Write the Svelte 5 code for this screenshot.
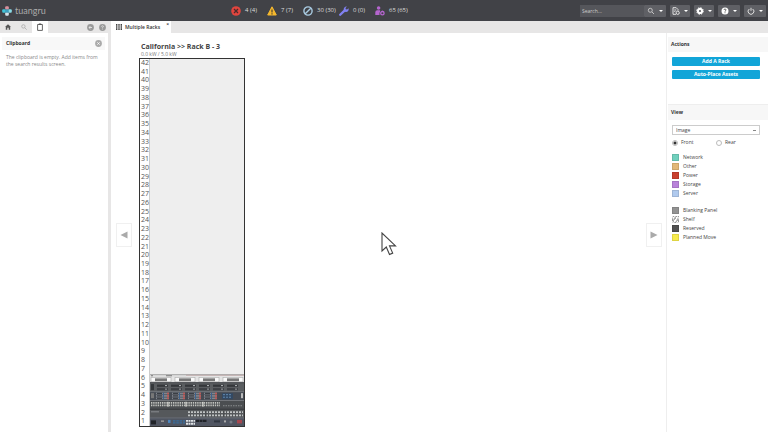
<script>
  const units = Array.from({ length: 42 }, (_, i) => 42 - i);

  const colors = [
    { name: "Network", cls: "network" },
    { name: "Other", cls: "other" },
    { name: "Power", cls: "power" },
    { name: "Storage", cls: "storage" },
    { name: "Server", cls: "server" },
  ];

  const placeholders = [
    { name: "Blanking Panel", cls: "blanking" },
    { name: "Shelf", cls: "shelf" },
    { name: "Reserved", cls: "reserved" },
    { name: "Planned Move", cls: "planned" },
  ];

  const range = (n) => Array.from({ length: n }, (_, i) => i);

  let search = "";
  let view = "image";
  let side = "front";
</script>

<div class="app">
  <header>
    <a class="logo" href="#home" aria-label="tuangru home">
      <svg viewBox="0 0 10 10" width="10" height="10">
        <rect x="3.2" y="0.2" width="3.6" height="3.6" rx="1" fill="#d8909c" />
        <rect x="0.2" y="3.2" width="3.6" height="3.6" rx="1" fill="#43c3d6" />
        <rect x="6.2" y="3.2" width="3.6" height="3.6" rx="1" fill="#8adbe6" />
        <rect x="3.2" y="6.2" width="3.6" height="3.6" rx="1" fill="#d5e2e8" />
        <rect x="3.4" y="3.4" width="3.2" height="3.2" fill="#3b9fc0" />
      </svg>
      <span>tuangru</span>
    </a>

    <div class="stats">
      <a href="#errors">
        <svg viewBox="0 0 10 10" width="10" height="10">
          <circle cx="5" cy="5" r="4.8" fill="#e0453e" />
          <path d="M3 3l4 4M7 3l-4 4" stroke="#4a2a2c" stroke-width="1.3" />
        </svg>
        4 (4)
      </a>
      <a href="#warnings">
        <svg viewBox="0 0 10 10" width="10" height="10">
          <path d="M5 .8L9.3 9H.7z" fill="#f5b82e" stroke="#f5b82e" stroke-linejoin="round" />
          <path d="M5 3.4v3M5 7.2v1.2" stroke="#4a4030" stroke-width="1.2" />
        </svg>
        7 (7)
      </a>
      <a href="#disabled">
        <svg viewBox="0 0 10 10" width="10" height="10" fill="none" stroke="#a9cbe2" stroke-width="1.4">
          <circle cx="5" cy="5" r="4.1" />
          <path d="M2.2 7.8l5.6-5.6" />
        </svg>
        30 (30)
      </a>
      <a href="#maintenance">
        <svg viewBox="0 0 10 10" width="10" height="10">
          <path d="M1.200 8.800l4.300-4.200" stroke="#8080f0" stroke-width="2.300" stroke-linecap="round" />
          <path d="M7.900.6L6.500 2l.3 1.300 1.300.3 1.400-1.400c.8 2.300-1.200 4.300-3.300 3.500C3.700 4.800 4.400.2 7.900.6z" fill="#8080f0" />
        </svg>
        0 (0)
      </a>
      <a href="#assets">
        <svg viewBox="0 0 10 10" width="10" height="10" fill="#b565cf">
          <circle cx="3.6" cy="2" r="1.8" />
          <path d="M.3 9V6.200q0-1.900 2-1.900h2.800v1.200L4.500 7v2z" />
          <circle cx="7.400" cy="7.200" r="1.700" fill="none" stroke="#b565cf" stroke-width="1.300" />
          <path d="M6.800 4.700h1.200v1H6.800z" />
        </svg>
        65 (65)
      </a>
    </div>

    <div class="tools">
      <form class="search" on:submit|preventDefault>
        <input type="text" aria-label="Search" placeholder="Search..." bind:value={search} />
        <button class="wide" aria-label="Search options">
          <svg viewBox="0 0 8 8" width="8" height="8" fill="none" stroke="#ccc" stroke-width=".9">
            <circle cx="3.300" cy="3.300" r="2" /><path d="M5 5l2 2" />
          </svg>
          <i class="caret"></i>
        </button>
      </form>
      <button aria-label="Reports">
        <svg viewBox="0 0 8 8" width="8" height="8" fill="none" stroke="#eee" stroke-width=".9">
          <path d="M4 7.300H1V.7h3.200L6 2.500v1.200M2.300 3h2M2.300 4.500h1" />
          <circle cx="5.700" cy="5.800" r="1.600" />
        </svg>
        <i class="caret"></i>
      </button>
      <button aria-label="Settings">
        <svg viewBox="0 0 8 8" width="8" height="8" fill="none" stroke="#fff">
          <circle cx="4" cy="4" r="2.100" stroke-width="2" />
          <circle cx="4" cy="4" r="3.300" stroke-width="1" stroke-dasharray="1.400 1.190" />
        </svg>
        <i class="caret"></i>
      </button>
      <button class="wide" aria-label="Help">
        <svg viewBox="0 0 8 8" width="8" height="8">
          <circle cx="4" cy="4" r="3.500" fill="#fff" />
          <path d="M3 3q.1-1 1-1t1 .9q0 .6-1 1.300v.5M4 5.300v.9" fill="none" stroke="#555" stroke-width=".9" />
        </svg>
        <i class="caret"></i>
      </button>
      <button class="wide" aria-label="Power">
        <svg viewBox="0 0 8 8" width="8" height="8" fill="none" stroke="#ddd">
          <path d="M2.300 2a2.900 2.900 0 1 0 3.400 0M4 .8v3" />
        </svg>
        <i class="caret"></i>
      </button>
    </div>
  </header>

  <div class="body">
    <aside class="left">
      <nav>
        <button aria-label="Home">
          <svg viewBox="0 0 6 6" width="6" height="6" fill="#555"><path d="M3 .3L6 3h-.8v2.700H3.700V3.800H2.300v1.900H.8V3H0z" /></svg>
        </button>
        <button aria-label="Find">
          <svg viewBox="0 0 6 6" width="6" height="6" fill="none" stroke="#aaa" stroke-width=".8"><circle cx="2.400" cy="2.400" r="1.700" /><path d="M3.700 3.700l2 2" /></svg>
        </button>
        <button class="active" aria-label="Clipboard">
          <svg viewBox="0 0 6 8" width="6" height="8" fill="none" stroke="#555" stroke-width=".9"><path d="M.6 1.500h4.800v5.900H.6z" /><path d="M1.800 1.200h2.400" stroke-width="1.400" /></svg>
        </button>
        <span class="space"></span>
        <button class="small" aria-label="Collapse">
          <svg viewBox="0 0 6 6" width="7" height="7"><circle cx="3" cy="3" r="2.900" fill="#999" /><path d="M4.300 3H1.800M2.900 1.800L1.700 3l1.200 1.200" fill="none" stroke="#eee" stroke-width=".7" /></svg>
        </button>
        <button class="small" aria-label="Sidebar help">
          <svg viewBox="0 0 6 6" width="7" height="7"><circle cx="3" cy="3" r="2.900" fill="#999" /><path d="M2.200 2.300q.1-.8.8-.8t.8.700q0 .4-.8.900v.4M3 4v.7" fill="none" stroke="#eee" stroke-width=".6" /></svg>
        </button>
      </nav>
      <div class="clip-head">
        <h2>Clipboard</h2>
        <button aria-label="Clear clipboard">
          <svg viewBox="0 0 6 6" width="7" height="7"><circle cx="3" cy="3" r="2.900" fill="#aaa" /><path d="M2 2l2 2M4 2L2 4" stroke="#fff" stroke-width=".7" /></svg>
        </button>
      </div>
      <p>The clipboard is empty. Add items from the search results screen.</p>
    </aside>

    <main>
      <div class="tabs">
        <div class="tab">
          <svg viewBox="0 0 6 6" width="6" height="6" fill="#444"><path d="M0 0h1.400v6H0zM2.300 0h1.400v6H2.300zM4.600 0H6v6H4.600z" /><path d="M0 2h6M0 4h6" stroke="#fff" stroke-width=".4" /></svg>
          <span>Multiple Racks</span>
          <button aria-label="Close tab">×</button>
        </div>
      </div>

      <div class="content">
        <section class="stage">
          <button class="arrow" aria-label="Previous rack">
            <svg viewBox="0 0 8 8" width="8" height="8"><path d="M7.500.5v7L.5 4z" fill="#aaa" /></svg>
          </button>
          <div class="rack-wrap">
            <h1>California &gt;&gt; Rack B - 3</h1>
            <div class="load">0.0 kW / 5.0 kW</div>
            <div class="rack">
              <ol>
                {#each units as u}
                  <li>{u}</li>
                {/each}
              </ol>
              <div class="slots">
                <svg class="devices" viewBox="0 0 94 52" preserveAspectRatio="none">
                  <!-- 6: drive shelf -->
                  <rect width="94" height="9" fill="#e4e4e4" />
                  <path d="M0 .2h94" stroke="#888" stroke-width=".8" />
                  <path d="M0 1.800h36" stroke="#d0d0d0" />
                  <path d="M1 1.800h2M16 1.800h6" stroke="#777" />
                  <path d="M36 1.300h58" stroke="#b59c9c" stroke-width=".8" />
                  {#each range(4) as i}
                    <rect x={1 + i * 24} y="3.300" width="20" height="4.500" fill="#fafafa" stroke="#aaa" stroke-width=".6" />
                    <rect x={5 + i * 24} y="4.300" width="12" height="2.800" fill="#777" />
                  {/each}
                  <!-- 5: server -->
                  <rect y="8.200" width="94" height="9.300" fill="#5a5d60" />
                  <rect y="8.200" width="94" height="1" fill="#45484b" />
                  <rect x="1" y="10" width="3" height="6" fill="#34373a" />
                  {#each range(6) as i}
                    <rect x={7 + i * 14} y="10.500" width="11" height="2.200" fill="#34373a" />
                    <rect x={7 + i * 14} y="14" width="11" height="2.200" fill="#3d4044" />
                    <rect x={15 + i * 14} y="11" width="2" height="1" fill="#b5b8ba" />
                    <rect x={15 + i * 14} y="14.500" width="2" height="1" fill="#9da0a3" />
                  {/each}
                  <!-- 4: server with drive bays -->
                  <rect y="17.300" width="94" height="9" fill="#464b53" />
                  <path d="M0 17.600h94" stroke="#777b80" stroke-width=".6" />
                  <rect x="1" y="19" width="3" height="5" fill="#777" />
                  {#each range(4) as i}
                    {#each range(3) as j}
                      <rect x={6 + i * 16} y={18.5 + j * 2.4} width="13" height="1.700" fill="#80858d" />
                      <rect x={7 + i * 16} y={18.7 + j * 2.4} width="5" height="1.200" fill="#3a3e44" />
                      <rect x={17 + i * 16} y={18.5 + j * 2.4} width="2" height="1.700" fill="#bd5a57" />
                    {/each}
                    <rect x={13 + i * 16} y="18.500" width="1" height="6.500" fill="#3d6390" />
                  {/each}
                  <rect x="72" y="19" width="11" height="6" fill="#334963" />
                  <path d="M73 20.500h8M73 23h9" stroke="#6f9bc4" stroke-width=".8" stroke-dasharray="2 1" />
                  <rect x="91" y="19" width="2" height="5" fill="#bbb" />
                  <!-- 3: switch -->
                  <rect y="26" width="94" height="9" fill="#4b4e51" />
                  <path d="M0 26.300h94" stroke="#85898d" stroke-width=".6" />
                  <path d="M1 28.700h69M1 31.200h69" stroke="#c0c2be" stroke-width="1.700" stroke-dasharray="1.400 .8" />
                  <path d="M18 27.500v5M36 27.500v5M53 27.500v5" stroke="#e7e7e2" />
                  <path d="M73 31.500h20" stroke="#8a8d8f" stroke-width="1.200" stroke-dasharray="1.500 1" />
                  <!-- 2: switch -->
                  <rect y="34.600" width="94" height="9" fill="#55585b" />
                  <path d="M0 35h94" stroke="#34373a" />
                  <rect x="1" y="37" width="8" height="1" fill="#898c90" />
                  <path d="M38 37.800h55M38 41h55" stroke="#c0c3c4" stroke-width="1.800" stroke-dasharray="2 1" />
                  <path d="M56 36.500v6M74 36.500v6" stroke="#404347" />
                  <!-- 1: appliance -->
                  <rect y="43.300" width="94" height="8.700" fill="#505561" />
                  <path d="M0 43.600h94" stroke="#747982" stroke-width=".6" />
                  <rect x="1" y="46" width="5" height="4" fill="#202328" />
                  <rect x="11" y="46" width="3" height="1.500" fill="#999" />
                  <rect x="18" y="45.500" width="2.500" height="3" fill="#4c86bd" />
                  <path d="M23 46.500h12M23 48.500h12" stroke="#376e9f" stroke-width="1.300" stroke-dasharray="2.500 .8" />
                  <path d="M36 46.500h9M36 49.300h9" stroke="#dfe3e6" stroke-width="1.900" stroke-dasharray="2 .5" />
                  <path d="M46 46.500h11" stroke="#202328" stroke-width="2.200" stroke-dasharray="3 .5" />
                  <rect x="64" y="46" width="6" height="2" fill="#303640" />
                  <rect x="74" y="46" width="2" height="2" fill="#aaa" />
                  <circle cx="81" cy="47.500" r="1.500" fill="#777d86" />
                  <rect x="87" y="45.500" width="5" height="3.500" fill="#a5484f" />
                </svg>
              </div>
            </div>
          </div>
          <button class="arrow next" aria-label="Next rack">
            <svg viewBox="0 0 8 8" width="8" height="8"><path d="M.5.5v7l7-3.500z" fill="#aaa" /></svg>
          </button>
        </section>

        <aside class="right">
          <section class="actions">
            <h2>Actions</h2>
            <div class="panel">
              <button>Add A Rack</button>
              <button>Auto-Place Assets</button>
            </div>
          </section>
          <section class="view">
            <h2>View</h2>
            <div class="panel">
              <select aria-label="View" bind:value={view}>
                <option value="image">Image</option>
                <option value="color">Color</option>
              </select>
              <div class="sides">
                <label><input type="radio" value="front" bind:group={side} />Front</label>
                <label><input type="radio" value="rear" bind:group={side} />Rear</label>
              </div>
              <ul>
                {#each colors as c}
                  <li><i class="swatch {c.cls}"></i>{c.name}</li>
                {/each}
              </ul>
              <ul>
                {#each placeholders as p}
                  <li><i class="swatch {p.cls}"></i>{p.name}</li>
                {/each}
              </ul>
            </div>
          </section>
        </aside>
      </div>
    </main>
  </div>

  <svg class="cursor" viewBox="0 0 16 24" width="16" height="24">
    <path d="M1 1v18l4.300-4 3.200 7.500 3.200-1.400-3.200-7.200h6z" fill="#fff" stroke="#444" stroke-width="1.100" />
  </svg>
</div>

<style>
  :global(body) {
    margin: 0;
  }

  .app {
    display: flex;
    flex-direction: column;
    height: 100vh;
    position: relative;
    overflow: hidden;
    background: #fff;
    color: #444;
    font-family: "Open Sans", "Noto Sans", sans-serif;
    font-size: 5px;
    line-height: 7px;
  }

  button,
  input,
  select {
    font: inherit;
    color: inherit;
    border: 0;
    padding: 0;
    margin: 0;
    background: none;
  }

  button {
    display: flex;
    align-items: center;
    justify-content: center;
  }

  a {
    color: inherit;
    text-decoration: none;
  }

  svg {
    display: block;
    flex: none;
  }

  h1,
  h2,
  p,
  ul,
  ol {
    margin: 0;
    padding: 0;
    list-style: none;
  }

  h2 {
    font-size: 5px;
    font-weight: 700;
    color: #333;
  }

  header {
    display: flex;
    align-items: center;
    flex: none;
    height: 21px;
    background: #414247;
    color: #ddd;
  }

  .logo {
    display: flex;
    align-items: center;
    gap: 3px;
    width: 231px;
    padding-left: 2px;
    box-sizing: border-box;
    font-family: Lato, sans-serif;
    font-size: 9px;
    line-height: 10px;
    color: #aaa;
  }

  .stats {
    display: flex;
    flex: 1;
  }

  .stats a {
    display: flex;
    align-items: center;
    gap: 4px;
    width: 36px;
    font-size: 6px;
    white-space: nowrap;
  }

  .tools {
    display: flex;
    gap: 4px;
    padding-right: 2px;
  }

  .tools button {
    gap: 4px;
    width: 20px;
    height: 12px;
    border-radius: 1px;
    background: #5f6065;
  }

  .tools .wide {
    width: 22px;
  }

  .search {
    display: flex;
  }

  .search input {
    width: 64px;
    height: 12px;
    box-sizing: border-box;
    padding-left: 2px;
    background: #55565b;
    color: #ddd;
  }

  .search input::placeholder {
    color: #ccc;
    opacity: 1;
  }

  .caret {
    border: 2px solid transparent;
    border-top-color: #fff;
    border-bottom: 0;
  }

  .body {
    display: flex;
    flex: 1;
    min-height: 0;
  }

  .left {
    flex: none;
    width: 108px;
    border-right: 3px solid #e7e6e6;
  }

  nav {
    display: flex;
    height: 12px;
    background: #e7e6e6;
  }

  nav button {
    width: 16px;
  }

  nav .active {
    background: #fff;
  }

  nav .small {
    width: 12px;
  }

  .space {
    flex: 1;
  }

  .clip-head {
    display: flex;
    align-items: center;
    justify-content: space-between;
    height: 13px;
    margin: 4px 3px 4px 2px;
    padding: 0 3px 0 4px;
    background: #f8f8f8;
  }

  .left p {
    padding: 0 6px;
    color: #888;
  }

  main {
    display: flex;
    flex-direction: column;
    flex: 1;
    min-width: 0;
  }

  .tabs {
    display: flex;
    flex: none;
    height: 12px;
    background: #e7e6e6;
  }

  .tab {
    display: flex;
    align-items: center;
    gap: 3px;
    padding: 0 2px 0 5px;
    background: #fff;
    color: #333;
    font-weight: 600;
  }

  .tab button {
    align-self: flex-start;
    padding-left: 3px;
  }

  .content {
    display: flex;
    flex: 1;
    min-height: 0;
  }

  .stage {
    display: flex;
    flex: 1;
    padding: 9px 4px 5px 5px;
  }

  .arrow {
    align-self: center;
    width: 16px;
    height: 24px;
    border: 1px solid #f0f0f0;
    flex: none;
  }

  .next {
    margin-left: auto;
  }

  .rack-wrap {
    display: flex;
    flex-direction: column;
    width: 106px;
    margin-left: 7px;
  }

  h1 {
    padding-left: 2px;
    font-size: 7px;
    font-weight: 700;
    line-height: 9px;
    color: #444;
    white-space: nowrap;
  }

  .load {
    padding-left: 2px;
    color: #777;
  }

  .rack {
    display: flex;
    flex: 1;
    min-height: 0;
    border: 1px solid #333;
    background: #eee;
  }

  ol {
    display: grid;
    grid-template-rows: repeat(42, minmax(0, 1fr));
    width: 9px;
    border-right: 1px solid #ccc;
    background: #fff;
    font-size: 7px;
    line-height: 7px;
    color: #555;
  }

  ol li {
    padding-left: 1px;
  }

  .slots {
    display: grid;
    flex: 1;
    grid-template-rows: repeat(42, minmax(0, 1fr));
  }

  .devices {
    grid-row: 37 / 43;
    width: 100%;
    height: 100%;
  }

  .right {
    flex: none;
    width: 100px;
    padding: 4px 0 0 1px;
    border-left: 1px solid #eee;
  }

  .right h2 {
    padding: 4px 3px;
    background: #f7f7f7;
  }

  .actions {
    height: 67px;
    border-bottom: 1px solid #eee;
  }

  .panel {
    display: flex;
    flex-direction: column;
    padding: 5px 8px 0 4px;
  }

  .actions button {
    height: 9px;
    margin-bottom: 4px;
    border-radius: 1px;
    background: #12a5d8;
    color: #fff;
    font-weight: 700;
  }

  select {
    height: 10px;
    padding: 0 3px;
    border: 1px solid #ccc;
    appearance: none;
    background: linear-gradient(#888, #888) right 3px center / 3px 1px no-repeat;
  }

  .sides {
    display: grid;
    grid-template-columns: 1fr 1fr;
    margin: 4px 0 7px;
  }

  label {
    display: flex;
    align-items: center;
    gap: 3px;
  }

  input[type="radio"] {
    appearance: none;
    box-sizing: border-box;
    width: 6px;
    height: 6px;
    border: 1px solid #bbb;
    border-radius: 50%;
  }

  input[type="radio"]:checked {
    background: radial-gradient(#333 1px, #fff 2px);
  }

  ul {
    margin-bottom: 8px;
  }

  ul li {
    display: flex;
    align-items: center;
    gap: 4px;
    height: 9px;
  }

  .swatch {
    width: 7px;
    height: 7px;
    box-sizing: border-box;
    border: 1px solid rgba(0, 0, 0, 0.1);
  }

  .network { background: #70d0bd; }
  .other { background: #e2b878; }
  .power { background: #c9402f; }
  .storage { background: #b982da; }
  .server { background: #b0caee; }
  .blanking { background: #929292; }
  .shelf { background: repeating-linear-gradient(120deg, #fff 0 1px, #aaa 2px 3px); }
  .reserved { background: #505050; }
  .planned { background: #f8ec4c; }

  .cursor {
    position: absolute;
    left: 381px;
    top: 232px;
  }
</style>
